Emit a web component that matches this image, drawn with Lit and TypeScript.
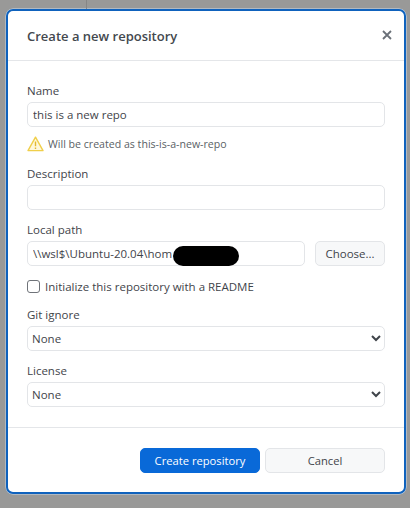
import { LitElement, html, css } from "lit";
import { customElement } from "lit/decorators.js";

@customElement("app-root")
export class AppRoot extends LitElement {
  static styles = css`
    :host {
      display: block;
      width: 410px;
      height: 508px;
      position: relative;
      overflow: hidden;
      background: #999998;
      font-family: "Open Sans", "Noto Sans", sans-serif;
      color: #3f444a;
      font-size: 11.5px;
      padding: 9px 4px 0 6px;
      box-sizing: border-box;
    }
    .bgline {
      position: absolute;
      left: 86px;
      top: 0;
      width: 1px;
      height: 9px;
      background: #868686;
    }
    .dialog {
      width: 400px;
      height: 485px;
      box-sizing: border-box;
      border: 2px solid #0f62bd;
      border-radius: 7px;
      background: #fff;
      display: flex;
      flex-direction: column;
      box-shadow: 0 0 0.5px 0.5px #c9d9ea;
    }
    header {
      height: 50px;
      box-sizing: border-box;
      border-bottom: 1px solid #e4e6e9;
      display: flex;
      align-items: center;
      justify-content: space-between;
      padding: 0 12px 0 19px;
    }
    h1 {
      margin: 0;
      font-size: 13px;
      font-weight: 600;
      color: #43484e;
    }
    .close {
      display: block;
      width: 10px;
      height: 10px;
      stroke: #6a7078;
      stroke-width: 1.8;
      fill: none;
      margin-bottom: 2px;
    }
    .body {
      height: 367px;
      box-sizing: border-box;
      padding: 21px 19px 0;
      border-bottom: 1px solid #e4e6e9;
      display: flex;
      flex-direction: column;
    }
    label {
      display: block;
      line-height: 17px;
      height: 17px;
      margin-bottom: 3px;
    }
    .field {
      height: 25px;
      box-sizing: border-box;
      width: 358px;
      border: 1px solid #e3e5e8;
      border-radius: 5px;
      background: #fff;
      font-family: inherit;
      font-size: 11.5px;
      color: #3f444a;
      padding: 0 5px;
      margin: 0;
      display: block;
      outline: none;
    }
    .warn {
      display: flex;
      align-items: center;
      gap: 4px;
      height: 18px;
      margin-top: 8px;
      margin-bottom: 12px;
      font-size: 10.6px;
      color: #5a5f66;
    }
    .warn svg {
      width: 17px;
      height: 16px;
      display: block;
    }
    .gap {
      margin-top: 11px;
    }
    .path-row {
      display: flex;
      gap: 10px;
      position: relative;
    }
    .path-row .field {
      width: 278px;
    }
    .blob {
      position: absolute;
      left: 146px;
      top: 5px;
      width: 66px;
      height: 20px;
      border-radius: 10px;
      background: #000;
    }
    .choose {
      width: 70px;
      height: 25px;
      box-sizing: border-box;
      border: 1px solid #e3e5e8;
      border-radius: 5px;
      background: #f7f8f9;
      font-family: inherit;
      font-size: 11.5px;
      color: #3f444a;
      padding: 0;
    }
    .check {
      display: flex;
      align-items: center;
      gap: 5px;
      height: 14px;
      margin: 13px 0 13px;
    }
    .box {
      width: 13px;
      height: 13px;
      box-sizing: border-box;
      border: 1px solid #6f7379;
      border-radius: 3px;
      background: #fff;
    }
    select.field {
      padding: 0;
    }
    .sel-gap {
      margin-top: 11px;
    }
    footer {
      flex: 1;
      display: flex;
      justify-content: flex-end;
      gap: 5px;
      padding: 20px 19px 0 0;
    }
    button {
      height: 25px;
      width: 120px;
      box-sizing: border-box;
      border-radius: 5px;
      font-family: inherit;
      font-size: 11.2px;
      padding: 0;
    }
    .primary {
      background: #0969d8;
      border: 1px solid #0969d8;
      color: #fff;
      font-weight: 500;
    }
    .secondary {
      background: #f7f8f9;
      border: 1px solid #e3e5e8;
      color: #3f444a;
    }
  `;

  render() {
    return html`
      <div class="bgline"></div>
      <div class="dialog">
        <header>
          <h1>Create a new repository</h1>
          <svg class="close" viewBox="0 0 10 10"><path d="M1 1l8 8M9 1l-8 8" /></svg>
        </header>
        <div class="body">
          <label>Name</label>
          <input class="field" .value=${"this is a new repo"} />
          <div class="warn">
            <svg viewBox="0 0 17 16">
              <path d="M8.5 1.2 16 14.6H1z" fill="#fff8dc" stroke="#f0cf4a" stroke-width="1.4" stroke-linejoin="round" />
              <path d="M8.5 5.6v4.6M8.5 11.6v1.5" stroke="#e2b92f" stroke-width="1.4" fill="none" />
            </svg>
            <span>Will be created as this-is-a-new-repo</span>
          </div>
          <label>Description</label>
          <input class="field" />
          <label class="gap">Local path</label>
          <div class="path-row">
            <input class="field" .value=${"\\\\wsl$\\Ubuntu-20.04\\hom"} />
            <div class="blob"></div>
            <button class="choose">Choose...</button>
          </div>
          <div class="check">
            <div class="box"></div>
            <span>Initialize this repository with a README</span>
          </div>
          <label>Git ignore</label>
          <select class="field"><option>None</option></select>
          <label class="sel-gap">License</label>
          <select class="field"><option>None</option></select>
        </div>
        <footer>
          <button class="primary">Create repository</button>
          <button class="secondary">Cancel</button>
        </footer>
      </div>
    `;
  }
}
